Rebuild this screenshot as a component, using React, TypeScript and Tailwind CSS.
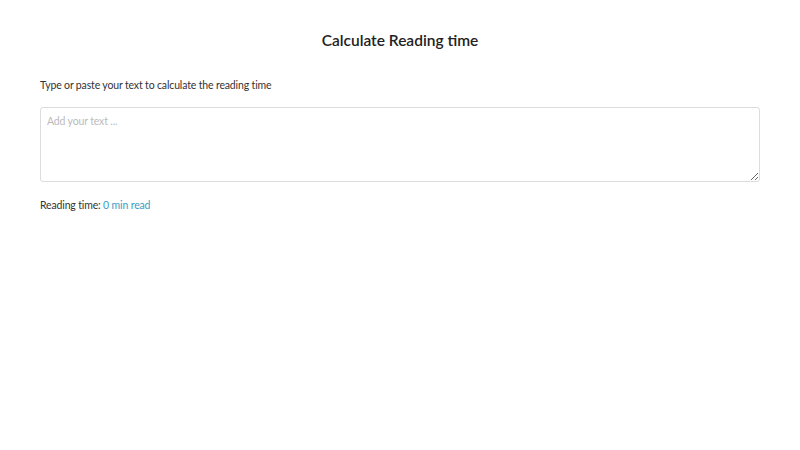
export default function App() {
  return (
    <div className="min-h-[450px] bg-white px-10 pt-[29px] text-[#333]" style={{ fontFamily: 'Lato, "Noto Sans", sans-serif' }}>
      <h1 className="text-center text-[15.5px] font-semibold leading-[22px] text-[#222]">Calculate Reading time</h1>
      <p className="mt-[26px] text-[10.5px] leading-[16px] tracking-[-0.15px]">Type or paste your text to calculate the reading time</p>
      <textarea
        className="mt-[14px] block h-[75px] w-full rounded-[3px] border border-[#dcdcdc] px-[6px] py-[6px] text-[10.5px] tracking-[-0.15px] outline-none placeholder:text-[#bbb]"
        placeholder="Add your text ..."
      />
      <p className="mt-[15px] text-[10.5px] leading-[16px] tracking-[-0.15px]">
        Reading time: <span className="text-[#3a9cc4]">0 min read</span>
      </p>
    </div>
  );
}
